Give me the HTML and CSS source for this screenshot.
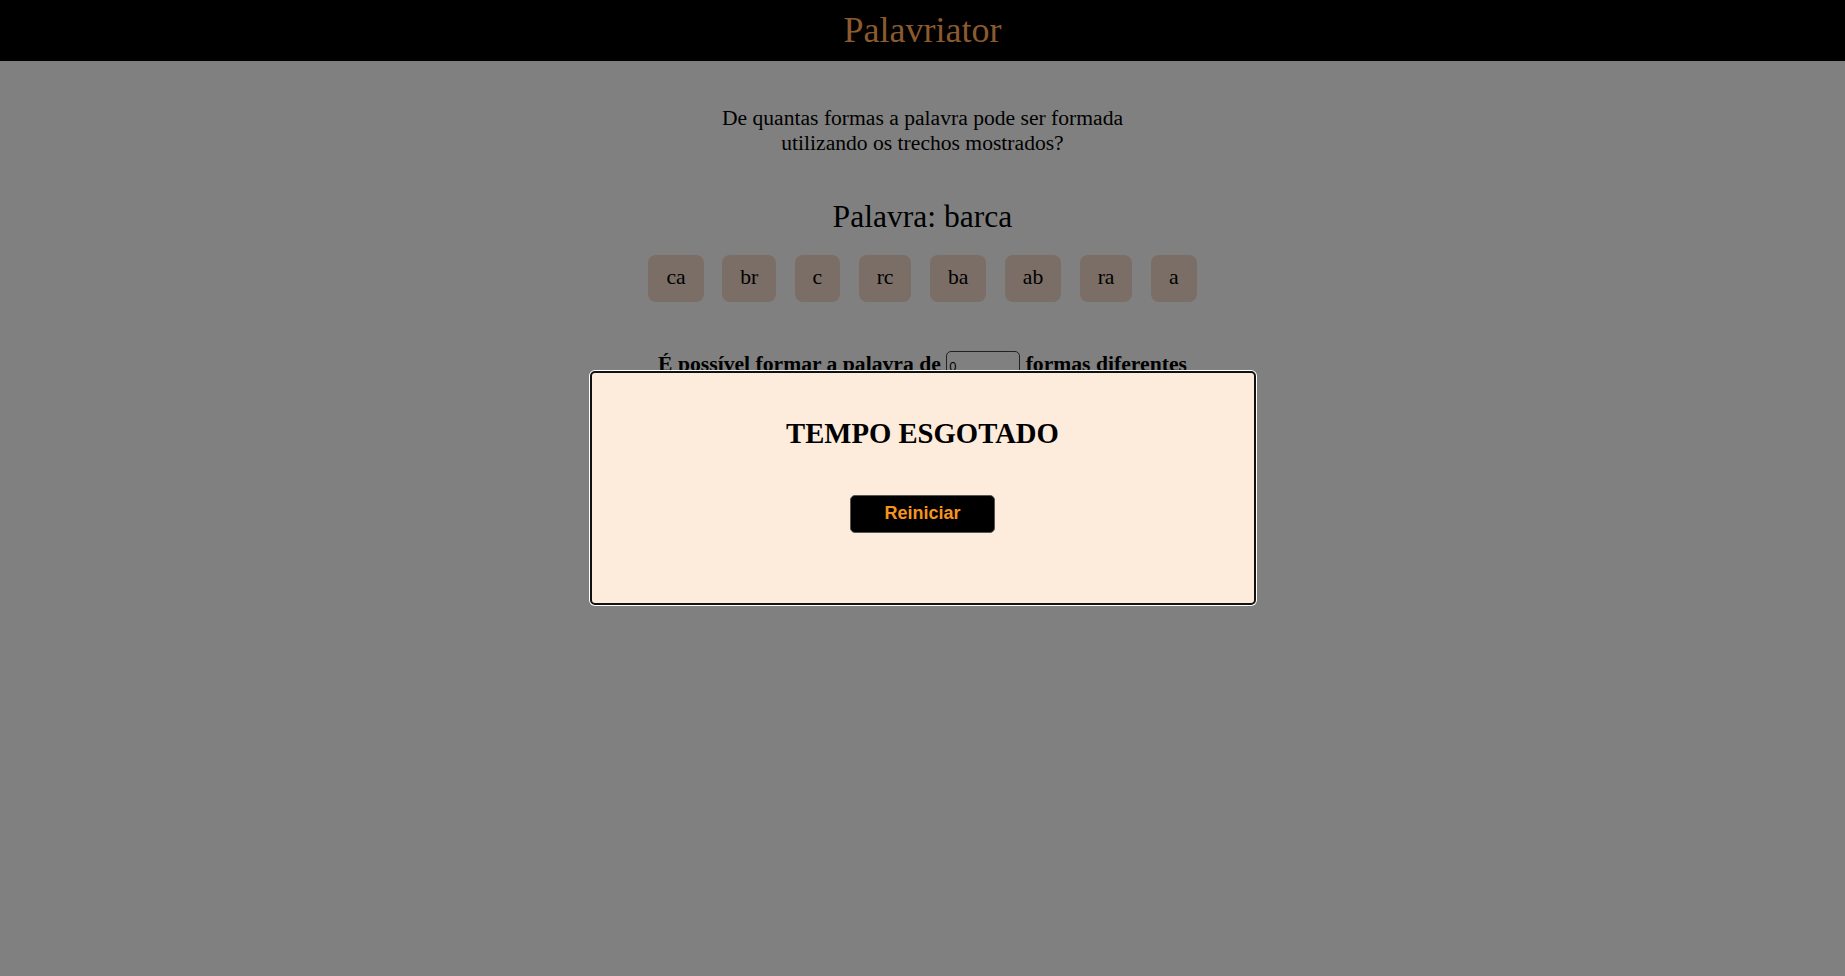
FILE: index.html
```html
<!DOCTYPE html>
<html lang="pt">
<head>
<meta charset="utf-8">
<title>Palavriator</title>
<link rel="stylesheet" href="styles.css">
</head>
<body>
<header class="topbar">
  <h1 class="brand">Palavriator</h1>
</header>
<main class="game">
  <p class="question">De quantas formas a palavra pode ser formada<br>utilizando os trechos mostrados?</p>
  <h2 class="word">Palavra: barca</h2>
  <div class="pieces">
    <span class="piece">ca</span>
    <span class="piece">br</span>
    <span class="piece">c</span>
    <span class="piece">rc</span>
    <span class="piece">ba</span>
    <span class="piece">ab</span>
    <span class="piece">ra</span>
    <span class="piece">a</span>
  </div>
  <p class="answer">É possível formar a palavra de <input class="answer-input" type="text" value="0"> formas diferentes</p>
</main>
<div class="modal">
  <h2 class="modal-title">TEMPO ESGOTADO</h2>
  <button class="restart" type="button">Reiniciar</button>
</div>
</body>
</html>
```
FILE: styles.css
```css
html, body {
  margin: 0;
  padding: 0;
}
body {
  background: #808080;
  font-family: "Liberation Serif", "Times New Roman", serif;
  color: #000;
  min-height: 976px;
  position: relative;
}
.topbar {
  background: #000;
  height: 61px;
  box-sizing: border-box;
  padding-bottom: 2px;
  display: flex;
  align-items: center;
  justify-content: center;
}
.brand {
  margin: 0;
  font-size: 36px;
  font-weight: normal;
  color: #8b5a2e;
  line-height: 1;
}
.game {
  display: flex;
  flex-direction: column;
  align-items: center;
  text-align: center;
}
.question {
  margin: 45px 0 0;
  font-size: 21.6px;
  line-height: 24.7px;
}
.word {
  margin: 44px 0 0;
  font-size: 31.6px;
  font-weight: normal;
  line-height: 36px;
}
.pieces {
  margin-top: 19.5px;
  display: flex;
  gap: 18.4px;
}
.piece {
  background: #7a6e66;
  border-radius: 8px;
  padding: 9.7px 18px 12px;
  font-size: 21.7px;
  line-height: 25px;
}
.answer {
  margin: 49.5px 0 0;
  font-size: 21.65px;
  font-weight: bold;
  line-height: 26px;
}
.answer-input {
  width: 74px;
  height: 31px;
  box-sizing: border-box;
  border: 1px solid #222;
  border-radius: 5px;
  background: transparent;
  font-family: "Liberation Sans", Arial, sans-serif;
  font-size: 13px;
  padding: 0 2px;
  color: #000;
  vertical-align: baseline;
}
.modal {
  position: absolute;
  top: 371px;
  left: 50%;
  transform: translateX(-50%);
  width: 662px;
  height: 230px;
  background: #fdebdb;
  border: 2px solid #111;
  border-radius: 5px;
  box-shadow: 0 0 0 1px #fff;
  display: flex;
  flex-direction: column;
  align-items: center;
}
.modal-title {
  margin: 44px 0 0;
  font-size: 28.7px;
  font-weight: bold;
  line-height: 32px;
}
.restart {
  margin-top: 46px;
  width: 145px;
  height: 37.5px;
  background: #000;
  color: #f7941d;
  border: 1px solid #555;
  border-radius: 5px;
  font-family: "Liberation Sans", Arial, sans-serif;
  font-size: 18px;
  font-weight: bold;
  cursor: pointer;
}
```
